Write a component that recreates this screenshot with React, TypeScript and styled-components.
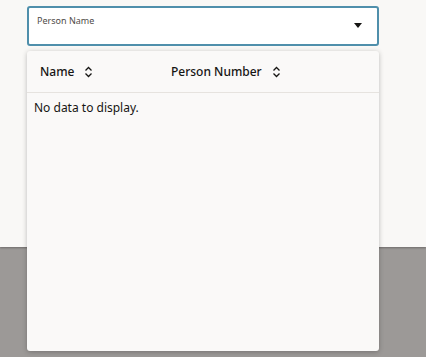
import styled, { createGlobalStyle } from 'styled-components';

const GlobalStyle = createGlobalStyle`
  html, body {
    margin: 0;
    padding: 0;
    height: 100%;
    background: #9c9997;
    font-family: "Noto Sans", "Open Sans", sans-serif;
  }
`

const Page = styled.div`
  position: relative;
  width: 426px;
  height: 357px;
  overflow: hidden;
  background: linear-gradient(#75726f, #9c9997 30px);
`

const Sheet = styled.div`
  height: 247px;
  background: #f9f8f6;
  padding: 6px 47px 0 27px;
  box-sizing: border-box;
  box-shadow: 0 1px 2px rgba(0, 0, 0, 0.3);
`

const Field = styled.div`
  position: relative;
  height: 40px;
  width: 352px;
  box-sizing: border-box;
  background: #fff;
  border: 2px solid #4f8fab;
  border-radius: 3px;
  padding: 7px 8px 0 8px;
`

const Label = styled.div`
  font-size: 9px;
  color: #4f4c49;
  line-height: 12px;
`

const Caret = styled.span`
  position: absolute;
  right: 15px;
  top: 15px;
  width: 0;
  height: 0;
  border-left: 4.5px solid transparent;
  border-right: 4.5px solid transparent;
  border-top: 5px solid #161513;
`

const Popup = styled.div`
  position: absolute;
  left: 27px;
  top: 51px;
  width: 352px;
  height: 300px;
  background: #faf9f8;
  border-radius: 3px;
  box-shadow: 0 1px 5px rgba(0, 0, 0, 0.25);
`

const HeaderRow = styled.div`
  display: flex;
  align-items: center;
  height: 41px;
  padding-left: 13px;
  border-bottom: 1px solid #e6e3df;
`

const HeaderCell = styled.div<{ $width: number }>`
  display: flex;
  align-items: center;
  gap: 10px;
  width: ${p => p.$width}px;
  font-size: 12px;
  font-weight: 500;
  color: #161513;
`

const Empty = styled.div`
  padding: 6px 7px;
  font-size: 12px;
  color: #161513;
`

const SortIcon = () => (
  <svg width="9" height="12" viewBox="0 0 9 12" fill="none" stroke="#161513" strokeWidth="1.3">
    <path d="M1.5 4.5 L4.5 1.5 L7.5 4.5" />
    <path d="M1.5 7.5 L4.5 10.5 L7.5 7.5" />
  </svg>
)

export default function App() {
  return (
    <>
      <GlobalStyle />
      <Page>
        <Sheet>
          <Field>
            <Label>Person Name</Label>
            <Caret />
          </Field>
        </Sheet>
        <Popup>
          <HeaderRow>
            <HeaderCell $width={131}>Name <SortIcon /></HeaderCell>
            <HeaderCell $width={180}>Person Number <SortIcon /></HeaderCell>
          </HeaderRow>
          <Empty>No data to display.</Empty>
        </Popup>
      </Page>
    </>
  );
}
